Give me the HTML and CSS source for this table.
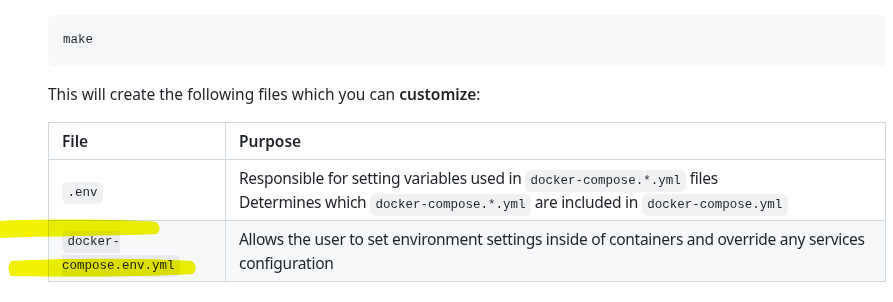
FILE: index.html
```html
<!DOCTYPE html>
<html>
<head>
<meta charset="utf-8">
<link rel="stylesheet" href="styles.css">
</head>
<body>
<div class="page">
  <div class="markdown">
    <pre class="codeblock"><code>make</code></pre>
    <p class="para">This will create the following files which you can <strong>customize</strong>:</p>
    <table class="files">
      <colgroup><col class="col-file"><col class="col-purpose"></colgroup>
      <thead>
        <tr><th>File</th><th>Purpose</th></tr>
      </thead>
      <tbody>
        <tr>
          <td><code class="chip">.env</code></td>
          <td>Responsible for setting variables used in <code class="chip">docker-compose.*.yml</code> files<br>Determines which <code class="chip">docker-compose.*.yml</code> are included in <code class="chip">docker-compose.yml</code></td>
        </tr>
        <tr class="striped">
          <td><code class="chip">docker-compose.env.yml</code></td>
          <td>Allows the user to set environment settings inside of containers and override any services configuration</td>
        </tr>
      </tbody>
    </table>
    <p class="para next">Next, edit the generated files, and start with <code class="chip">docker</code> to <code class="chip">run</code> then check logs with <code class="chip">ps</code> to <code class="chip">log</code> or use <code class="chip">off</code></p>
  </div>
  <svg class="highlight" width="210" height="70" viewBox="0 215 210 70" aria-hidden="true">
    <path d="M0,221 C40,219 120,219 156,222 Q163,228 157,234 C110,236 50,236 0,238 Z" fill="#f2f200"/>
    <path d="M11,261 C60,258 150,258 192,261 Q199,267 193,274 C140,277 60,277 11,276 Q6,268 11,261 Z" fill="#f2f200"/>
  </svg>
</div>
</body>
</html>
```
FILE: styles.css
```css
html, body {
  margin: 0;
  padding: 0;
  background: #ffffff;
}

.page {
  position: relative;
  width: 893px;
  height: 302px;
  overflow: hidden;
}

.markdown {
  padding: 15px 0 0 48px;
  width: 838px;
  font-family: "Noto Sans", "Open Sans", sans-serif;
  font-size: 15.5px;
  line-height: 24px;
  color: #1f2328;
}

.codeblock {
  margin: 0 0 16px 0;
  padding: 16px 15px;
  height: 19px;
  background: #f6f8fa;
  border-radius: 6px;
  font-family: "Liberation Mono", "DejaVu Sans Mono", monospace;
  font-size: 12.5px;
  line-height: 19px;
  color: #1f2328;
}

.codeblock code {
  font-family: inherit;
  font-size: inherit;
  line-height: inherit;
}

.para {
  margin: 0 0 16px 0;
}

.para strong {
  font-weight: 600;
}

.files {
  width: 838px;
  border-collapse: collapse;
  border-spacing: 0;
  table-layout: fixed;
  margin-bottom: 16px;
}

.col-file {
  width: 177px;
}

.files th,
.files td {
  border: 1px solid #d1d9e0;
  padding: 6px 13px;
  text-align: left;
  vertical-align: middle;
}

.files td {
  letter-spacing: -0.28px;
}

.files th {
  font-weight: 600;
}

.files tr {
  background: #ffffff;
}

.files tr.striped {
  background: #f6f8fa;
}

.chip {
  font-family: "Liberation Mono", "DejaVu Sans Mono", monospace;
  font-size: 12.5px;
  letter-spacing: 0;
  line-height: 1;
  padding: 3.6px 5.4px;
  margin: 0;
  background: rgba(129, 139, 152, 0.12);
  border-radius: 6px;
  white-space: break-spaces;
}

.next,
.next .chip {
  white-space: nowrap;
}

.highlight {
  position: absolute;
  left: 0;
  top: 215px;
  mix-blend-mode: multiply;
}
```
